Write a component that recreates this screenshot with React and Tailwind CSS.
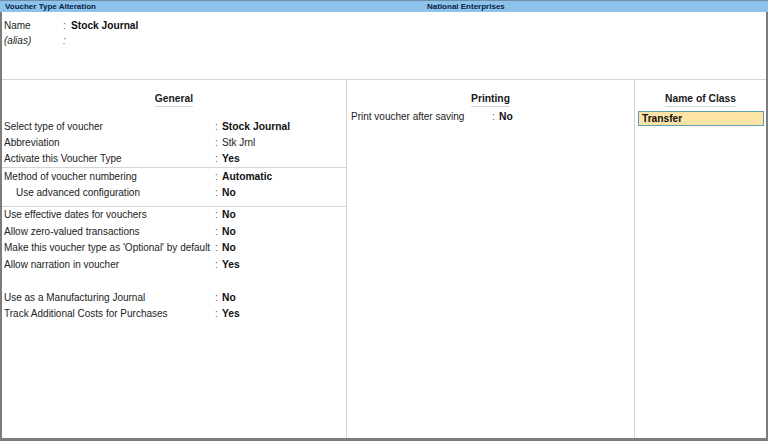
import React from 'react';

const generalGroups = [
  {
    rows: [
      { label: 'Select type of voucher', value: 'Stock Journal', bold: true },
      { label: 'Abbreviation', value: 'Stk Jrnl', bold: false },
      { label: 'Activate this Voucher Type', value: 'Yes', bold: true },
    ],
  },
  {
    rows: [
      { label: 'Method of voucher numbering', value: 'Automatic', bold: true },
      { label: 'Use advanced configuration', value: 'No', bold: true, indent: true },
    ],
  },
  {
    rows: [
      { label: 'Use effective dates for vouchers', value: 'No', bold: true },
      { label: 'Allow zero-valued transactions', value: 'No', bold: true },
      { label: "Make this voucher type as 'Optional' by default", value: 'No', bold: true },
      { label: 'Allow narration in voucher', value: 'Yes', bold: true },
      { label: '', value: '' },
      { label: 'Use as a Manufacturing Journal', value: 'No', bold: true },
      { label: 'Track Additional Costs for Purchases', value: 'Yes', bold: true },
    ],
  },
];

function Row({ label, value, bold, indent, h }) {
  return (
    <div className={`flex items-baseline whitespace-nowrap ${h}`}>
      <div className={`w-[213px] ${indent ? 'pl-[14px]' : 'pl-[2px]'} text-[#222]`}>{label}</div>
      {label && <div className="w-[7px] text-[#555]">:</div>}
      <div className={bold ? 'font-bold text-[10.3px] text-[#111]' : 'text-[#222]'}>{value}</div>
    </div>
  );
}

function Heading({ children }) {
  return (
    <div className="flex justify-center pt-[11px]">
      <div className="border-b border-[#d4d4d4] text-[10.3px] leading-[15px] font-bold text-[#1a1a1a]">{children}</div>
    </div>
  );
}

export default function App() {
  return (
    <div
      className="w-[768px] h-[441px] bg-[#7d7d7d] flex flex-col text-[10px] text-[#222]"
      style={{ fontFamily: '"Liberation Sans", Arial, sans-serif' }}
    >
      {/* title bar */}
      <div className="h-[12px] bg-[#8dc2ea] flex items-center text-[8px] font-bold text-[#0b2346] border-t border-[#6f8fa8] whitespace-nowrap">
        <div className="pl-[5px] w-[427px]">Voucher Type Alteration</div>
        <div>National Enterprises</div>
      </div>

      <div className="flex-1 flex flex-col bg-white mx-[2px] mb-[3px]">
        {/* header */}
        <div className="h-[68px] border-b border-[#d6d6d6] pt-[6px] pl-[2px]">
          <div className="flex items-baseline h-[15px] leading-[15px]">
            <div className="w-[59px]">Name</div>
            <div className="w-[8px] text-[#555]">:</div>
            <div className="text-[10.2px] font-bold text-[#111]">Stock Journal</div>
          </div>
          <div className="flex items-baseline h-[15px] leading-[15px]">
            <div className="w-[59px] italic">(alias)</div>
            <div className="w-[8px] text-[#555] italic">:</div>
          </div>
        </div>

        {/* columns */}
        <div className="flex-1 flex">
          <div className="w-[345px] border-r border-[#d6d6d6]">
            <Heading>General</Heading>
            <div className="mt-[12px]">
              <div className="border-b border-[#d6d6d6]">
                {generalGroups[0].rows.map((r, i) => (
                  <Row key={i} {...r} h="h-[16px] leading-[16px]" />
                ))}
              </div>
              <div className="border-b border-[#d6d6d6] pt-[1px] pb-[5px]">
                {generalGroups[1].rows.map((r, i) => (
                  <Row key={i} {...r} h="h-[16px] leading-[16px]" />
                ))}
              </div>
              <div>
                {generalGroups[2].rows.map((r, i) => (
                  <Row key={i} {...r} h="h-[16.5px] leading-[16.5px]" />
                ))}
              </div>
            </div>
          </div>

          <div className="w-[288px] border-r border-[#d6d6d6]">
            <Heading>Printing</Heading>
            <div className="flex items-baseline h-[16px] leading-[16px] mt-[2px] pl-[4px] whitespace-nowrap">
              <div className="w-[141px]">Print voucher after saving</div>
              <div className="w-[7px] text-[#555]">:</div>
              <div className="font-bold text-[10.3px] text-[#111]">No</div>
            </div>
          </div>

          <div className="flex-1">
            <Heading>Name of Class</Heading>
            <div className="mt-[4px] ml-[3px] mr-[2px] h-[15px] bg-[#fde4a6] border border-[#5b9fb0] flex items-center pl-[3px] font-bold text-[10.2px] text-[#111]">
              Transfer
            </div>
          </div>
        </div>
      </div>
    </div>
  );
}
